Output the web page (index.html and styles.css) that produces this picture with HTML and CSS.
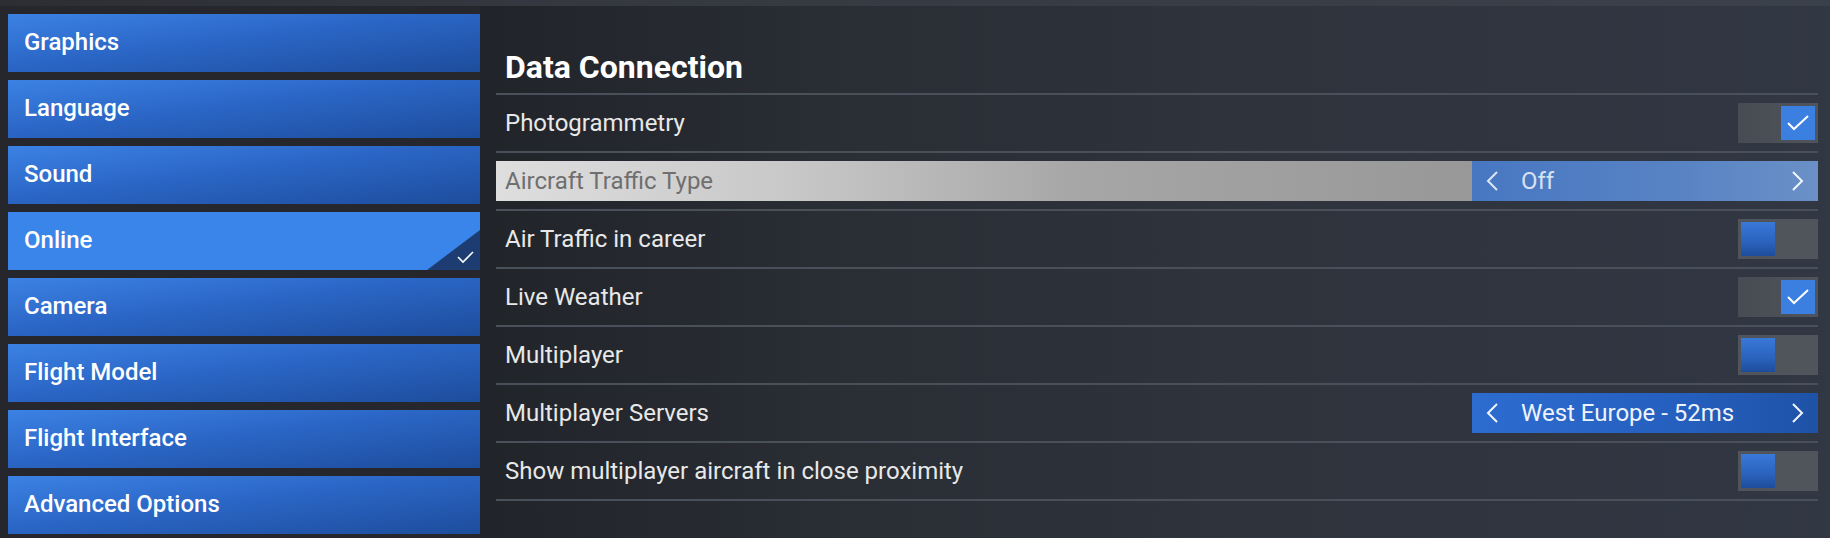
FILE: index.html
```html
<!DOCTYPE html>
<html>
<head>
<meta charset="utf-8">
<link rel="stylesheet" href="styles.css">
</head>
<body>
<div class="topbar"></div>
<div class="layout">
  <nav class="sidebar">
    <div class="navbtn">Graphics</div>
    <div class="navbtn">Language</div>
    <div class="navbtn">Sound</div>
    <div class="navbtn active">Online
      <span class="corner">
        <svg width="53" height="40" viewBox="0 0 53 40"><polygon points="0,40 53,0 53,40" fill="#1d3c72"/><polyline points="31,27 36,32 46,22" fill="none" stroke="#ffffff" stroke-width="1.6"/></svg>
      </span>
    </div>
    <div class="navbtn">Camera</div>
    <div class="navbtn">Flight Model</div>
    <div class="navbtn">Flight Interface</div>
    <div class="navbtn">Advanced Options</div>
  </nav>
  <main class="content">
    <h1 class="title">Data Connection</h1>
    <div class="rows">
      <div class="row">
        <div class="label">Photogrammetry</div>
        <div class="toggle on"><span class="knob"><svg width="24" height="18" viewBox="0 0 24 18"><polyline points="2,9 8,15 22,2" fill="none" stroke="#fff" stroke-width="2"/></svg></span></div>
      </div>
      <div class="row">
        <div class="label hl">Aircraft Traffic Type</div>
        <div class="selector dim">
          <svg class="chev" width="13" height="20" viewBox="0 0 13 20"><polyline points="11,1 2,10 11,19" fill="none" stroke="#dce6f5" stroke-width="2"/></svg>
          <span class="value">Off</span>
          <svg class="chev" width="13" height="20" viewBox="0 0 13 20"><polyline points="2,1 11,10 2,19" fill="none" stroke="#f2f6fc" stroke-width="2"/></svg>
        </div>
      </div>
      <div class="row">
        <div class="label">Air Traffic in career</div>
        <div class="toggle"><span class="knob"></span></div>
      </div>
      <div class="row">
        <div class="label">Live Weather</div>
        <div class="toggle on"><span class="knob"><svg width="24" height="18" viewBox="0 0 24 18"><polyline points="2,9 8,15 22,2" fill="none" stroke="#fff" stroke-width="2"/></svg></span></div>
      </div>
      <div class="row">
        <div class="label">Multiplayer</div>
        <div class="toggle"><span class="knob"></span></div>
      </div>
      <div class="row">
        <div class="label">Multiplayer Servers</div>
        <div class="selector">
          <svg class="chev" width="13" height="20" viewBox="0 0 13 20"><polyline points="11,1 2,10 11,19" fill="none" stroke="#f2f6fc" stroke-width="2"/></svg>
          <span class="value">West Europe - 52ms</span>
          <svg class="chev" width="13" height="20" viewBox="0 0 13 20"><polyline points="2,1 11,10 2,19" fill="none" stroke="#f2f6fc" stroke-width="2"/></svg>
        </div>
      </div>
      <div class="row">
        <div class="label">Show multiplayer aircraft in close proximity</div>
        <div class="toggle"><span class="knob"></span></div>
      </div>
    </div>
  </main>
</div>
</body>
</html>
```
FILE: styles.css
```css
html, body {
  margin: 0;
  padding: 0;
}
body {
  width: 1830px;
  height: 538px;
  overflow: hidden;
  background: #25272c;
  font-family: Roboto, "Liberation Sans", sans-serif;
  color: #ececec;
}
.topbar {
  height: 6px;
  background: linear-gradient(90deg, #2c2e33 0%, #353840 30%, #3b414b 100%);
}
.layout {
  display: flex;
  height: 532px;
}
.sidebar {
  width: 472px;
  padding: 8px 0 0 8px;
  display: flex;
  flex-direction: column;
  gap: 8px;
  background: #25272c;
}
.navbtn {
  position: relative;
  height: 58px;
  box-sizing: border-box;
  padding-bottom: 2px;
  display: flex;
  align-items: center;
  padding-left: 16px;
  font-size: 24px;
  font-weight: 500;
  color: #ffffff;
  background: linear-gradient(to bottom right, #3b82e4 0%, #2b66c6 45%, #1d4d9c 100%);
}
.navbtn.active {
  background: #3985e9;
}
.corner {
  position: absolute;
  right: 0;
  bottom: 0;
  width: 53px;
  height: 40px;
}
.corner svg {
  display: block;
}
.content {
  flex: 1;
  padding: 0 12px 0 16px;
  background: linear-gradient(90deg, #212429 0%, #292d34 25%, #2e333c 55%, #313743 100%);
}
.title {
  margin: 0;
  padding: 39px 0 0 9px;
  height: 48px;
  font-size: 32px;
  font-weight: 700;
  line-height: 44px;
  color: #ffffff;
  border-bottom: 2px solid #4a5059;
  box-sizing: content-box;
}
.rows {
  display: flex;
  flex-direction: column;
}
.row {
  display: flex;
  align-items: center;
  height: 40px;
  padding: 8px 0;
  border-bottom: 2px solid #4a5059;
}
.label {
  flex: 1;
  height: 40px;
  line-height: 40px;
  padding-left: 9px;
  font-size: 24px;
  color: #e8e8e8;
}
.label.hl {
  color: #6f6f6f;
  background: linear-gradient(90deg, #dedede 0%, #c8c8c8 30%, #a6a6a6 60%, #989898 100%);
}
.toggle {
  width: 80px;
  height: 40px;
  box-sizing: border-box;
  padding: 3px;
  background: #50555c;
  display: flex;
  justify-content: flex-start;
}
.toggle.on {
  background: linear-gradient(90deg, #474c54, #50555c);
  justify-content: flex-end;
}
.knob {
  width: 34px;
  height: 34px;
  background: linear-gradient(180deg, #3a78d8 0%, #2a62bd 60%, #1d4c9b 100%);
  display: flex;
  align-items: center;
  justify-content: center;
}
.toggle.on .knob {
  background: #3b7fe0;
}
.knob svg {
  display: block;
}
.selector {
  width: 346px;
  height: 40px;
  box-sizing: border-box;
  padding: 0 14px;
  display: flex;
  align-items: center;
  background: linear-gradient(90deg, #2d6cd0 0%, #255fbe 60%, #1e52a6 100%);
  color: #eef3fb;
  font-size: 24px;
}
.selector.dim {
  background: linear-gradient(90deg, #4877c2 0%, #5883c4 60%, #6a90c6 100%);
  color: #d6e1f2;
}
.chev {
  display: block;
  flex: none;
}
.value {
  flex: 1;
  padding-left: 22px;
  line-height: 40px;
}
```
